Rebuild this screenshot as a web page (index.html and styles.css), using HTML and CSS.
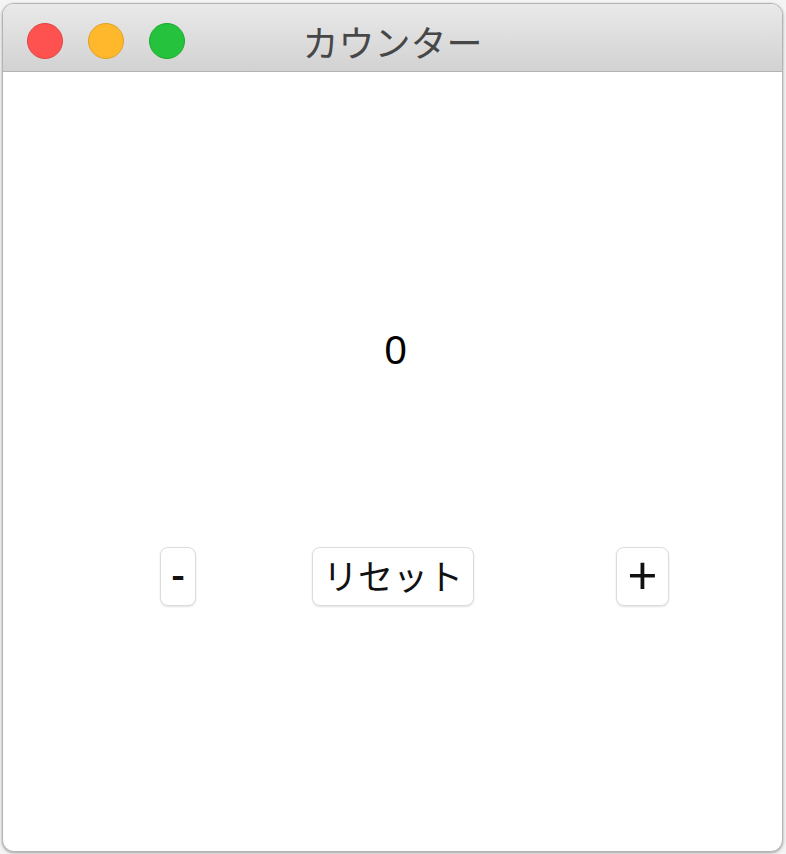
FILE: index.html
```html
<!DOCTYPE html>
<html lang="ja">
<head>
<meta charset="utf-8">
<title>カウンター</title>
<link rel="stylesheet" href="styles.css">
</head>
<body>
<div class="window">
  <div class="titlebar">
    <div class="lights">
      <span class="light red"></span>
      <span class="light yellow"></span>
      <span class="light green"></span>
    </div>
    <div class="title">カウンター</div>
    <div class="spacer"></div>
  </div>
  <div class="content">
    <div class="count">0</div>
    <div class="buttons">
      <button class="btn btn-minus">-</button>
      <button class="btn btn-reset">リセット</button>
      <button class="btn btn-plus">+</button>
    </div>
  </div>
</div>
</body>
</html>
```
FILE: styles.css
```css
html, body {
  margin: 0;
  padding: 0;
  background: #f4f4f4;
}
body {
  width: 786px;
  height: 854px;
  overflow: hidden;
  font-family: "Liberation Sans", "Noto Sans CJK JP", sans-serif;
}
.window {
  box-sizing: border-box;
  width: 781px;
  height: 849px;
  margin: 3px 0 0 2px;
  border: 1px solid #b4b4b4;
  border-radius: 12px;
  background: #fff;
  overflow: hidden;
  box-shadow: 0 1px 3px rgba(0, 0, 0, 0.35);
  display: flex;
  flex-direction: column;
}
.titlebar {
  box-sizing: border-box;
  height: 68px;
  flex: none;
  padding-top: 6px;
  background: linear-gradient(#e9e9e9, #d2d2d2);
  border-bottom: 1px solid #b3b3b3;
  display: grid;
  grid-template-columns: 1fr auto 1fr;
  align-items: center;
}
.lights {
  display: flex;
  gap: 25px;
  padding-left: 24px;
}
.light {
  box-sizing: border-box;
  width: 36px;
  height: 36px;
  border-radius: 50%;
  border: 1px solid;
}
.red { background: #fe5250; border-color: #e0443e; }
.yellow { background: #ffb72c; border-color: #dea123; }
.green { background: #25c33d; border-color: #1aab29; }
.title {
  font-family: "Noto Sans CJK JP", sans-serif;
  font-size: 36px;
  line-height: 44px;
  color: #474747;
}
.content {
  flex: 1;
  display: flex;
  flex-direction: column;
  align-items: center;
  padding-top: 254px;
}
.count {
  font-size: 40px;
  line-height: 48px;
  color: #000;
  padding-left: 6px;
}
.buttons {
  align-self: stretch;
  display: flex;
  align-items: center;
  padding-left: 157px;
  margin-top: 173px;
}
.btn {
  box-sizing: border-box;
  height: 59px;
  padding: 0 0 5px;
  border: 1px solid #dcdcdc;
  border-radius: 8px;
  background: #fff;
  box-shadow: 0 1px 2px rgba(0, 0, 0, 0.12);
  color: #111;
  font-family: "Noto Sans CJK JP", sans-serif;
  font-size: 36px;
  line-height: 1;
  display: flex;
  align-items: center;
  justify-content: center;
}
.btn-minus { width: 36px; font-weight: 700; font-size: 38px; padding-bottom: 8px; }
.btn-reset {
  width: 162px;
  margin-left: 116px;
  font-size: 35px;
}
.btn-plus { width: 53px; margin-left: 142px; font-size: 52px; padding-bottom: 8px; }
```
